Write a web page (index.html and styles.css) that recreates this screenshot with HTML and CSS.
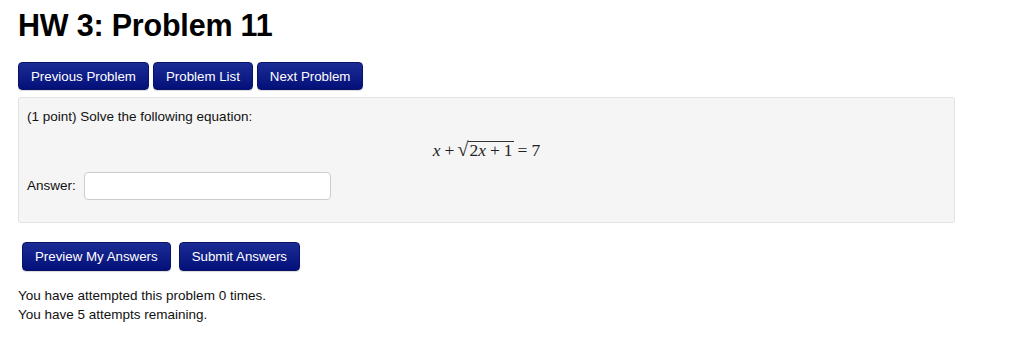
FILE: index.html
```html
<!DOCTYPE html>
<html>
<head>
<meta charset="utf-8">
<link rel="stylesheet" href="styles.css">
</head>
<body>
<div class="page">
  <h1 class="title">HW 3: Problem 11</h1>
  <div class="nav">
    <a class="btn">Previous Problem</a>
    <a class="btn">Problem List</a>
    <a class="btn">Next Problem</a>
  </div>
  <div class="problem">
    <p class="prompt">(1 point) Solve the following equation:</p>
    <div class="eq">
      <span class="var">x</span><span class="op">+</span><span class="sqrt"><span class="radical">√</span><span class="radicand">2<span class="var">x</span><span class="op">+</span>1</span></span><span class="op">=</span>7
    </div>
    <div class="answer">
      <label class="label">Answer:</label>
      <input class="input" type="text">
    </div>
  </div>
  <div class="submit">
    <a class="btn btn-lg">Preview My Answers</a>
    <a class="btn btn-lg">Submit Answers</a>
  </div>
  <div class="status">
    <div>You have attempted this problem 0 times.</div>
    <div>You have 5 attempts remaining.</div>
  </div>
</div>
</body>
</html>
```
FILE: styles.css
```css
html, body { margin: 0; padding: 0; background: #fff; }
body { font-family: "Liberation Sans", Arial, sans-serif; color: #111; font-size: 13.5px; }
.page { padding: 8px 0 0 18px; width: 937px; }
.title { font-size: 30.5px; font-weight: bold; margin: 0; line-height: 34px; color: #000; letter-spacing: -0.2px; }
.nav { display: flex; gap: 4px; margin-top: 20px; }
.btn {
  display: inline-flex; align-items: center; justify-content: center;
  height: 28px; padding: 0 12px; box-sizing: border-box;
  color: #fff; font-size: 13.3px; border-radius: 4px;
  background: linear-gradient(#1b2c95, #04107a);
  border: 1px solid #0a1466;
  box-shadow: 0 1px 1px rgba(0,0,0,0.15);
}
.problem {
  margin-top: 7px; background: #f5f5f5; border: 1px solid #e3e3e3; border-radius: 3px;
  height: 126px; box-sizing: border-box; padding: 11px 8px 0 8px;
}
.prompt { margin: 0; line-height: 16px; }
.eq {
  font-family: "Liberation Serif", "Times New Roman", serif; font-size: 17.5px;
  text-align: center; margin-top: 13px; height: 22px; line-height: 22px; color: #222;
  display: flex; justify-content: center; align-items: baseline;
}
.var { font-style: italic; }
.op { padding: 0 4px; }
.sqrt { display: inline-flex; align-items: baseline; margin-left: -1px; }
.radical { font-size: 20px; margin-right: 0; }
.radicand { border-top: 1px solid #333; line-height: 17px; padding: 0 1px; }
.answer { display: flex; align-items: center; gap: 8px; margin-top: 12px; }
.label { line-height: 16px; }
.input {
  width: 247px; height: 28px; box-sizing: border-box; border: 1px solid #ccc;
  border-radius: 4px; background: #fff; margin: 0; padding: 0 6px;
}
.submit { display: flex; gap: 8px; margin-top: 19px; padding-left: 4px; }
.btn-lg { height: 29px; padding: 0 12px; }
.status { margin-top: 15px; line-height: 19px; }
```
